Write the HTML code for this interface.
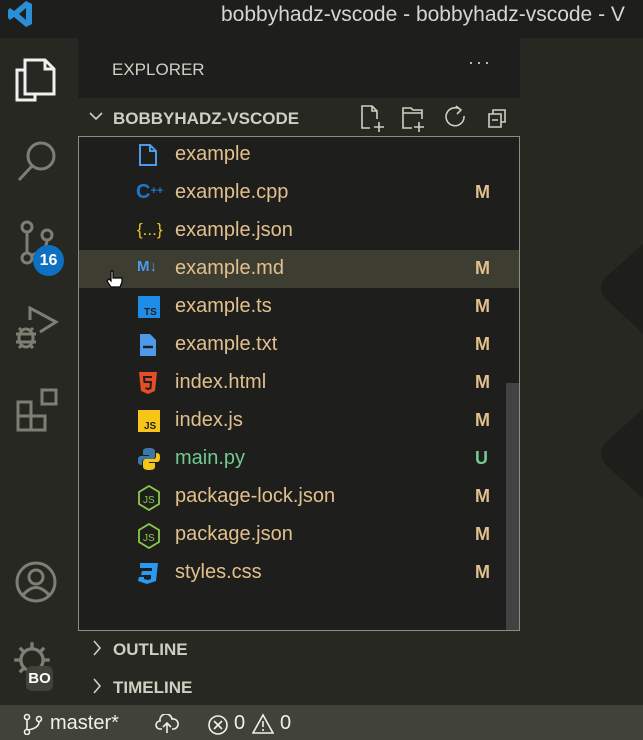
<!DOCTYPE html>
<html><head><meta charset="utf-8"><style>
*{margin:0;padding:0;box-sizing:border-box}
body{width:643px;height:740px;overflow:hidden;background:#272822;font-family:"Liberation Sans","DejaVu Sans",sans-serif;position:relative}
.abs{position:absolute}
#title{left:0;top:0;width:643px;height:38px;background:#1e1f1c}
#title .t{left:221px;top:3px;color:#d6d6d0;font-size:21px;white-space:nowrap}
#act{left:0;top:38px;width:78px;height:667px;background:#272822}
#side{left:78px;top:38px;width:442px;height:667px;background:#1e1f1c}
#side2{left:78px;top:98px;width:442px;height:607px;background:#272822}
.hdr{color:#cfcfc2;font-size:17px;font-weight:bold}
#list{left:78px;top:136px;width:442px;height:495px;background:#1e1f1c;border:1px solid #8d8c7e}
.row{position:absolute;left:0;width:440px;height:38px}
.row .n{position:absolute;left:96px;top:7px;font-size:20px;color:#e2c08d}
.row .m{position:absolute;left:396px;top:8px;font-size:18px;font-weight:bold;color:#e2c08d}
.row svg{position:absolute;left:58px;top:7px}
#status{left:0;top:705px;width:643px;height:35px;background:#414339;color:#f0f0ec;font-size:20px}
</style></head><body>
<div id="title" class="abs">
<svg class="abs" style="left:8px;top:0" width="26" height="28" viewBox="0 0 26 28"><path d="M18 1 L24 4 V24 L18 27 L6 17 L2 20 L0 18 V10 L2 8 L6 11 Z M18 8 L11 14 L18 20 Z" fill="#2b8fd8"/></svg>
<div class="abs t">bobbyhadz-vscode - bobbyhadz-vscode - V</div></div>
<div id="act" class="abs">
<svg class="abs" style="left:14px;top:20px" width="42" height="44" viewBox="0 0 42 44" fill="none" stroke="#f0f0f0" stroke-width="3"><path d="M11 12 H3 V42 H21 V36"/><path d="M11 2 H31 L40 11 V36 H11 Z"/><path d="M31 2 V11 H40"/></svg>
<svg class="abs" style="left:16px;top:102px" width="44" height="44" viewBox="0 0 44 44" fill="none" stroke="#7f7e74" stroke-width="3"><circle cx="25" cy="16" r="13"/><path d="M16 26 L3 40"/></svg>
<svg class="abs" style="left:16px;top:182px" width="40" height="46" viewBox="0 0 40 46" fill="none" stroke="#7f7e74" stroke-width="3"><circle cx="11" cy="7" r="5"/><circle cx="31" cy="15" r="5"/><circle cx="11" cy="38" r="5"/><path d="M11 12 V33 M31 20 Q31 30 16 35"/></svg>
<div class="abs" style="left:33px;top:207px;width:31px;height:31px;border-radius:50%;background:#0e70c0;color:#fff;font-weight:bold;font-size:16px;text-align:center;line-height:31px">16</div>
<svg class="abs" style="left:14px;top:268px" width="46" height="46" viewBox="0 0 46 46" fill="none" stroke="#7f7e74" stroke-width="3"><path d="M16 14 V2 L42 16 L26 26"/><ellipse cx="12" cy="32" rx="7" ry="9"/><path d="M2 28 H22 M2 36 H22 M5 22 L8 25 M19 22 L16 25 M5 42 L8 39 M19 42 L16 39"/></svg>
<svg class="abs" style="left:15px;top:350px" width="44" height="46" viewBox="0 0 44 46" fill="none" stroke="#7f7e74" stroke-width="3"><path d="M3 14 H16 V42 H3 Z M3 28 H30 V42 H16 M27 2 H41 V16 H27 Z"/></svg>
<svg class="abs" style="left:14px;top:522px" width="44" height="44" viewBox="0 0 44 44" fill="none" stroke="#7f7e74" stroke-width="3"><circle cx="22" cy="22" r="19"/><circle cx="22" cy="17" r="7"/><path d="M9 35 Q22 20 35 35"/></svg>
<svg class="abs" style="left:12px;top:602px" width="40" height="40" viewBox="0 0 36 36" fill="none" stroke="#7f7e74" stroke-width="3"><circle cx="18" cy="18" r="10"/><path d="M18 2 V8 M18 28 V34 M2 18 H8 M28 18 H34 M7 7 L11 11 M25 25 L29 29 M7 29 L11 25 M25 11 L29 7"/></svg>
<div class="abs" style="left:26px;top:628px;width:27px;height:25px;border-radius:6px;background:#414339;color:#fff;font-weight:bold;font-size:15px;text-align:center;line-height:25px">BO</div>
</div>
<div id="side" class="abs"></div>
<div id="side2" class="abs"></div>
<div class="abs" style="left:112px;top:60px;color:#cfcfc2;font-size:17px">EXPLORER</div>
<div class="abs" style="left:468px;top:52px;color:#cfcfc2;font-size:18px;letter-spacing:2px">···</div>
<svg class="abs" style="left:89px;top:111px" width="14" height="10" viewBox="0 0 14 10" fill="none" stroke="#cfcfc2" stroke-width="1.6"><path d="M1 2 L7 8 L13 2"/></svg>
<div class="abs hdr" style="left:113px;top:109px">BOBBYHADZ-VSCODE</div>
<svg class="abs" style="left:360px;top:104px" width="150" height="28" viewBox="0 0 150 28" fill="none" stroke="#cfcfc2" stroke-width="1.6"><path d="M10 24 H2 V2 H12 L17 7 V15 M12 2 V7 H17 M19 18 V28 M14 23 H24"/><path d="M52 24 H43 V4 H51 L53 6 H62 V15 M43 9 H62 M59 18 V28 M54 23 H64"/><path d="M101 6 A9 9 0 1 0 104 12 M96 2 L101 6 L97 10"/><path d="M133 10 V6 H145 V18 H141 M129 10 H141 V23 H129 Z M132 16 H138"/></svg>
<div id="list" class="abs">
<div class="row" style="top:-1px"><svg width="22" height="24" viewBox="0 0 22 24" fill="none" stroke="#4d9be8" stroke-width="2"><path d="M3 2 H13 L19 8 V22 H3 Z M13 2 V8 H19"/></svg><div class="n" style="color:#e2c08d">example</div></div>
<div class="row" style="top:37px"><div class="abs" style="left:57px;top:7px;color:#1c79c9;font-weight:bold;font-size:20px">C<span style="font-size:11px;vertical-align:4px">++</span></div><div class="n">example.cpp</div><div class="m">M</div></div>
<div class="row" style="top:75px"><div class="abs" style="left:58px;top:8px;color:#f0c030;font-size:17px">{...}</div><div class="n">example.json</div></div>
<div class="row" style="top:113px;background:#3e3d32"><div class="abs" style="left:58px;top:8px;color:#4d9be8;font-weight:bold;font-size:15px">M↓</div><div class="n">example.md</div><div class="m">M</div></div>
<div class="row" style="top:151px"><svg width="24" height="24" viewBox="0 0 24 24"><rect x="1" y="1" width="22" height="22" fill="#1f8ce8"/><text x="7" y="20" font-size="10" font-weight="bold" fill="#1e1f1c" font-family="Liberation Sans">TS</text></svg><div class="n">example.ts</div><div class="m">M</div></div>
<div class="row" style="top:189px"><svg width="22" height="24" viewBox="0 0 22 24"><path d="M3 1 H13 L19 7 V23 H3 Z" fill="#4d9be8"/><path d="M6 14 H16" stroke="#1e1f1c" stroke-width="2.5"/></svg><div class="n">example.txt</div><div class="m">M</div></div>
<div class="row" style="top:227px"><svg width="22" height="24" viewBox="0 0 22 24"><path d="M2 1 H20 L18 20 L11 23 L4 20 Z" fill="#e44d26"/><path d="M15 6 H7 L7.5 11 H14 L13.5 17 L11 18 L8.5 17" fill="none" stroke="#1e1f1c" stroke-width="2"/></svg><div class="n">index.html</div><div class="m">M</div></div>
<div class="row" style="top:265px"><svg width="24" height="24" viewBox="0 0 24 24"><rect x="1" y="1" width="22" height="22" fill="#f5c518"/><text x="7" y="20" font-size="10" font-weight="bold" fill="#1e1f1c" font-family="Liberation Sans">JS</text></svg><div class="n">index.js</div><div class="m">M</div></div>
<div class="row" style="top:303px"><svg width="24" height="24" viewBox="0 0 24 24"><path d="M12 1 C6 1 6 3 6 5 V8 H12 V9 H4 C1 9 1 12 1 14 C1 17 2 18 5 18 V15 C5 13 6 12 8 12 H15 C17 12 18 11 18 9 V5 C18 2 16 1 12 1 Z" fill="#3b77a8"/><path d="M12 23 C18 23 18 21 18 19 V16 H12 V15 H20 C23 15 23 12 23 10 C23 7 22 6 19 6 V9 C19 11 18 12 16 12 H9 C7 12 6 13 6 15 V19 C6 22 8 23 12 23 Z" fill="#f5c518"/></svg><div class="n" style="color:#73c991">main.py</div><div class="m" style="color:#73c991">U</div></div>
<div class="row" style="top:341px"><svg width="24" height="26" viewBox="0 0 24 26" fill="none" stroke="#8cc84b" stroke-width="1.8"><path d="M12 1 L22 7 V19 L12 25 L2 19 V7 Z"/><text x="6" y="18" font-size="10" fill="#8cc84b" stroke="none" font-family="Liberation Sans">JS</text></svg><div class="n">package-lock.json</div><div class="m">M</div></div>
<div class="row" style="top:379px"><svg width="24" height="26" viewBox="0 0 24 26" fill="none" stroke="#8cc84b" stroke-width="1.8"><path d="M12 1 L22 7 V19 L12 25 L2 19 V7 Z"/><text x="6" y="18" font-size="10" fill="#8cc84b" stroke="none" font-family="Liberation Sans">JS</text></svg><div class="n">package.json</div><div class="m">M</div></div>
<div class="row" style="top:417px"><svg width="24" height="24" viewBox="0 0 24 24"><path d="M3 2 H21 L19 20 L10 23 L1 20 L2 16 H7 L7 18 L11 19 L14 18 L14 14 H4 L5 10 H15 L15 7 H3 Z" fill="#2a9af0"/></svg><div class="n">styles.css</div><div class="m">M</div></div>
<div class="abs" style="left:427px;top:246px;width:13px;height:247px;background:#424242"></div>
</div>
<svg class="abs" style="left:92px;top:640px" width="10" height="16" viewBox="0 0 10 16" fill="none" stroke="#cfcfc2" stroke-width="1.6"><path d="M2 1 L8 8 L2 15"/></svg>
<div class="abs hdr" style="left:113px;top:640px">OUTLINE</div>
<svg class="abs" style="left:92px;top:678px" width="10" height="16" viewBox="0 0 10 16" fill="none" stroke="#cfcfc2" stroke-width="1.6"><path d="M2 1 L8 8 L2 15"/></svg>
<div class="abs hdr" style="left:113px;top:678px">TIMELINE</div>
<svg class="abs" style="left:598px;top:244px" width="45" height="260" viewBox="0 0 45 260"><path d="M45 0 L8 33 Q-2 44 8 55 L45 90 Z M45 165 L8 198 Q-2 210 8 221 L45 255 Z" fill="#1e1f1b"/></svg>
<div id="status" class="abs">
<svg class="abs" style="left:22px;top:8px" width="22" height="22" viewBox="0 0 22 22" fill="none" stroke="#f0f0ec" stroke-width="1.6"><circle cx="5" cy="4" r="2.5"/><circle cx="17" cy="6" r="2.5"/><circle cx="5" cy="19" r="2.5"/><path d="M5 7 V16 M17 9 Q17 15 6 17"/></svg>
<div class="abs" style="left:50px;top:7px">master*</div>
<svg class="abs" style="left:155px;top:9px" width="24" height="20" viewBox="0 0 24 20" fill="none" stroke="#f0f0ec" stroke-width="1.6"><path d="M7 15 H5 A4 4 0 0 1 5 7 A6 6 0 0 1 17 5 A5 5 0 0 1 19 15 H17 M12 19 V9 M8 13 L12 9 L16 13"/></svg>
<svg class="abs" style="left:207px;top:9px" width="22" height="22" viewBox="0 0 22 22" fill="none" stroke="#f0f0ec" stroke-width="1.6"><circle cx="11" cy="11" r="9"/><path d="M7 7 L15 15 M15 7 L7 15"/></svg>
<div class="abs" style="left:234px;top:7px">0</div>
<svg class="abs" style="left:252px;top:8px" width="22" height="22" viewBox="0 0 22 22" fill="none" stroke="#f0f0ec" stroke-width="1.6"><path d="M11 2 L21 20 H1 Z M11 8 V14 M11 16 V18"/></svg>
<div class="abs" style="left:280px;top:7px">0</div>
</div>
<svg class="abs" style="left:106px;top:270px" width="18" height="20" viewBox="0 0 18 20"><path d="M5 1 V11 L3 9 L1 11 L5 17 H14 L16 12 V8 H7 V1 Z" fill="#fff" stroke="#000" stroke-width="1.2"/></svg>
</body></html>
